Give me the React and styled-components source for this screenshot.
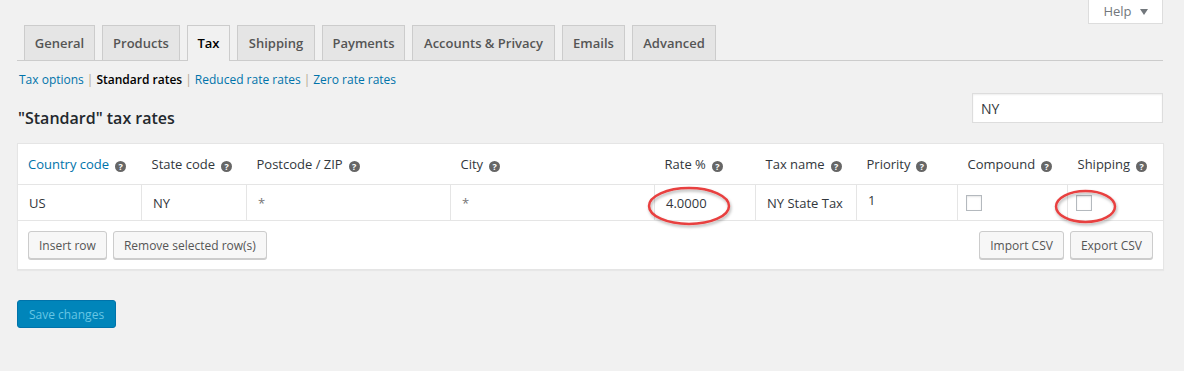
import React from "react";
import styled, { createGlobalStyle } from "styled-components";

const Global = createGlobalStyle`
  html, body { margin: 0; padding: 0; background: #f1f1f1; }
  body { font-family: "Open Sans", "Noto Sans", Arial, sans-serif; color: #32373c; }
  * { box-sizing: border-box; }
`;

const Page = styled.div`
  position: relative;
  width: 1184px;
  height: 371px;
  padding: 0 21px 0 17px;
  overflow: hidden;
`;

const HelpBar = styled.div`
  display: flex;
  justify-content: flex-end;
  height: 25px;
`;

const HelpButton = styled.div`
  width: 75px;
  height: 25px;
  margin-top: -1px;
  background: #fff;
  border: 1px solid #ddd;
  border-top: none;
  display: flex;
  align-items: center;
  justify-content: center;
  gap: 8px;
  font-size: 13px;
  color: #72777c;
`;

const Arrow = styled.span`
  width: 0;
  height: 0;
  border-left: 4px solid transparent;
  border-right: 4px solid transparent;
  border-top: 6px solid #72777c;
  margin-top: 1px;
`;

const TabWrapper = styled.div`
  display: flex;
  align-items: flex-end;
  gap: 7px;
  padding-left: 7px;
  border-bottom: 1px solid #ccc;
`;

const Tab = styled.div`
  width: ${(p) => p.$w}px;
  height: ${(p) => (p.$active ? 36 : 35)}px;
  margin-bottom: ${(p) => (p.$active ? -1 : 0)}px;
  border: 1px solid #ccc;
  border-bottom: none;
  background: ${(p) => (p.$active ? "#f1f1f1" : "#e5e5e5")};
  color: ${(p) => (p.$active ? "#000" : "#555")};
  font-size: 13px;
  font-weight: 600;
  display: flex;
  align-items: flex-start;
  justify-content: center;
  padding-top: 7px;
  line-height: 20px;
  white-space: nowrap;
`;

const SubNav = styled.div`
  margin-top: 10px;
  padding-left: 2px;
  font-size: 12px;
  line-height: 18px;
  color: #b5a58f;
  white-space: nowrap;
`;

const SubLink = styled.span`
  color: ${(p) => (p.$current ? "#000" : "#0073aa")};
  font-weight: ${(p) => (p.$current ? 600 : 400)};
`;

const Sep = styled.span`
  margin: 0 3px;
`;

const HeaderRow = styled.div`
  margin-top: 4px;
  display: flex;
  justify-content: space-between;
  align-items: flex-start;
`;

const Heading = styled.h2`
  margin: 14px 0 0 1px;
  font-size: 16px;
  font-weight: 600;
  line-height: 22px;
  color: #23282d;
`;

const Search = styled.div`
  width: 191px;
  height: 30px;
  background: #fff;
  border: 1px solid #ddd;
  box-shadow: inset 0 1px 2px rgba(0, 0, 0, 0.07);
  padding: 0 8px;
  display: flex;
  align-items: center;
  font-size: 14px;
  color: #32373c;
`;

const Table = styled.table`
  margin-top: 14px;
  width: 1146px;
  border-collapse: collapse;
  table-layout: fixed;
  background: #fff;
  border: 1px solid #e5e5e5;
  box-shadow: 0 1px 1px rgba(0, 0, 0, 0.04);
`;

const Th = styled.th`
  height: 41px;
  padding: 0 10px;
  text-align: left;
  font-weight: 400;
  font-size: 13px;
  color: ${(p) => (p.$link ? "#0073aa" : "#32373c")};
  white-space: nowrap;
`;

const Tip = styled.span`
  display: inline-flex;
  align-items: center;
  justify-content: center;
  width: 11px;
  height: 11px;
  border-radius: 50%;
  background: #666;
  color: #fff;
  font-size: 9px;
  font-weight: 700;
  line-height: 1;
  margin-left: 6px;
  vertical-align: -1px;
`;

const Td = styled.td`
  height: 36px;
  padding: ${(p) => (p.$raise ? "0 10px 6px 11px" : "0 10px 0 11px")};
  border-top: 1px solid #e5e5e5;
  font-size: 13px;
  color: ${(p) => (p.$muted ? "#777" : "#32373c")};
  white-space: nowrap;
  & + & { border-left: 1px solid #e5e5e5; }
`;

const Check = styled.span`
  display: inline-block;
  width: 16px;
  height: 16px;
  margin: 4px 0 0 -3px;
  border: 1px solid #b4b9be;
  background: #fff;
  box-shadow: inset 0 1px 2px rgba(0, 0, 0, 0.1);
`;

const FootCell = styled.td`
  border-top: 1px solid #e5e5e5;
  padding: 10px;
`;

const FootBar = styled.div`
  display: flex;
  justify-content: space-between;
`;

const Group = styled.div`
  display: flex;
  gap: 6px;
`;

const Button = styled.div`
  height: 28px;
  padding: 0 10px;
  display: flex;
  align-items: center;
  font-size: 12px;
  color: #555;
  background: #f7f7f7;
  border: 1px solid #ccc;
  border-radius: 3px;
  box-shadow: 0 1px 0 #ccc;
  white-space: nowrap;
`;

const SaveButton = styled.div`
  margin-top: 30px;
  width: 99px;
  height: 28px;
  display: flex;
  align-items: center;
  justify-content: center;
  font-size: 12px;
  color: #66c6e4;
  background: #0085ba;
  border: 1px solid #0073aa;
  border-radius: 3px;
`;

const Overlay = styled.svg`
  position: absolute;
  left: 0;
  top: 0;
  pointer-events: none;
`;

const tabs = [
  ["General", 71],
  ["Products", 78],
  ["Tax", 43, true],
  ["Shipping", 78],
  ["Payments", 83],
  ["Accounts & Privacy", 143],
  ["Emails", 63],
  ["Advanced", 84],
];

const cols = [124, 105, 204, 204, 101, 101, 101, 110, 96];
const heads = [
  "Country code",
  "State code",
  "Postcode / ZIP",
  "City",
  "Rate %",
  "Tax name",
  "Priority",
  "Compound",
  "Shipping",
];

export default function App() {
  return (
    <>
      <Global />
      <Page>
        <HelpBar>
          <HelpButton>
            Help <Arrow />
          </HelpButton>
        </HelpBar>
        <TabWrapper>
          {tabs.map(([t, w, a]) => (
            <Tab key={t} $w={w} $active={a}>
              {t}
            </Tab>
          ))}
        </TabWrapper>
        <SubNav>
          <SubLink>Tax options</SubLink>
          <Sep>|</Sep>
          <SubLink $current>Standard rates</SubLink>
          <Sep>|</Sep>
          <SubLink>Reduced rate rates</SubLink>
          <Sep>|</Sep>
          <SubLink>Zero rate rates</SubLink>
        </SubNav>
        <HeaderRow>
          <Heading>"Standard" tax rates</Heading>
          <Search>NY</Search>
        </HeaderRow>
        <Table>
          <colgroup>
            {cols.map((w, i) => (
              <col key={i} style={{ width: w }} />
            ))}
          </colgroup>
          <thead>
            <tr>
              {heads.map((h, i) => (
                <Th key={h} $link={i === 0}>
                  {h}
                  <Tip>?</Tip>
                </Th>
              ))}
            </tr>
          </thead>
          <tbody>
            <tr>
              <Td>US</Td>
              <Td>NY</Td>
              <Td $muted>*</Td>
              <Td $muted>*</Td>
              <Td>4.0000</Td>
              <Td>NY State Tax</Td>
              <Td $raise>1</Td>
              <Td>
                <Check />
              </Td>
              <Td>
                <Check />
              </Td>
            </tr>
            <tr>
              <FootCell colSpan={9}>
                <FootBar>
                  <Group>
                    <Button>Insert row</Button>
                    <Button>Remove selected row(s)</Button>
                  </Group>
                  <Group>
                    <Button>Import CSV</Button>
                    <Button>Export CSV</Button>
                  </Group>
                </FootBar>
              </FootCell>
            </tr>
          </tbody>
        </Table>
        <SaveButton>Save changes</SaveButton>
        <Overlay width="1184" height="371" viewBox="0 0 1184 371">
          <defs>
            <filter id="sh" x="-20%" y="-40%" width="140%" height="180%">
              <feDropShadow dx="1" dy="2" stdDeviation="1.5" floodColor="#000" floodOpacity="0.3" />
            </filter>
          </defs>
          <ellipse
            cx="689"
            cy="206"
            rx="40"
            ry="18"
            fill="none"
            stroke="#e8403f"
            strokeWidth="2.5"
            filter="url(#sh)"
          />
          <ellipse
            cx="1085.5"
            cy="206.5"
            rx="29.5"
            ry="15.5"
            fill="none"
            stroke="#e8403f"
            strokeWidth="2.5"
            filter="url(#sh)"
          />
        </Overlay>
      </Page>
    </>
  );
}
